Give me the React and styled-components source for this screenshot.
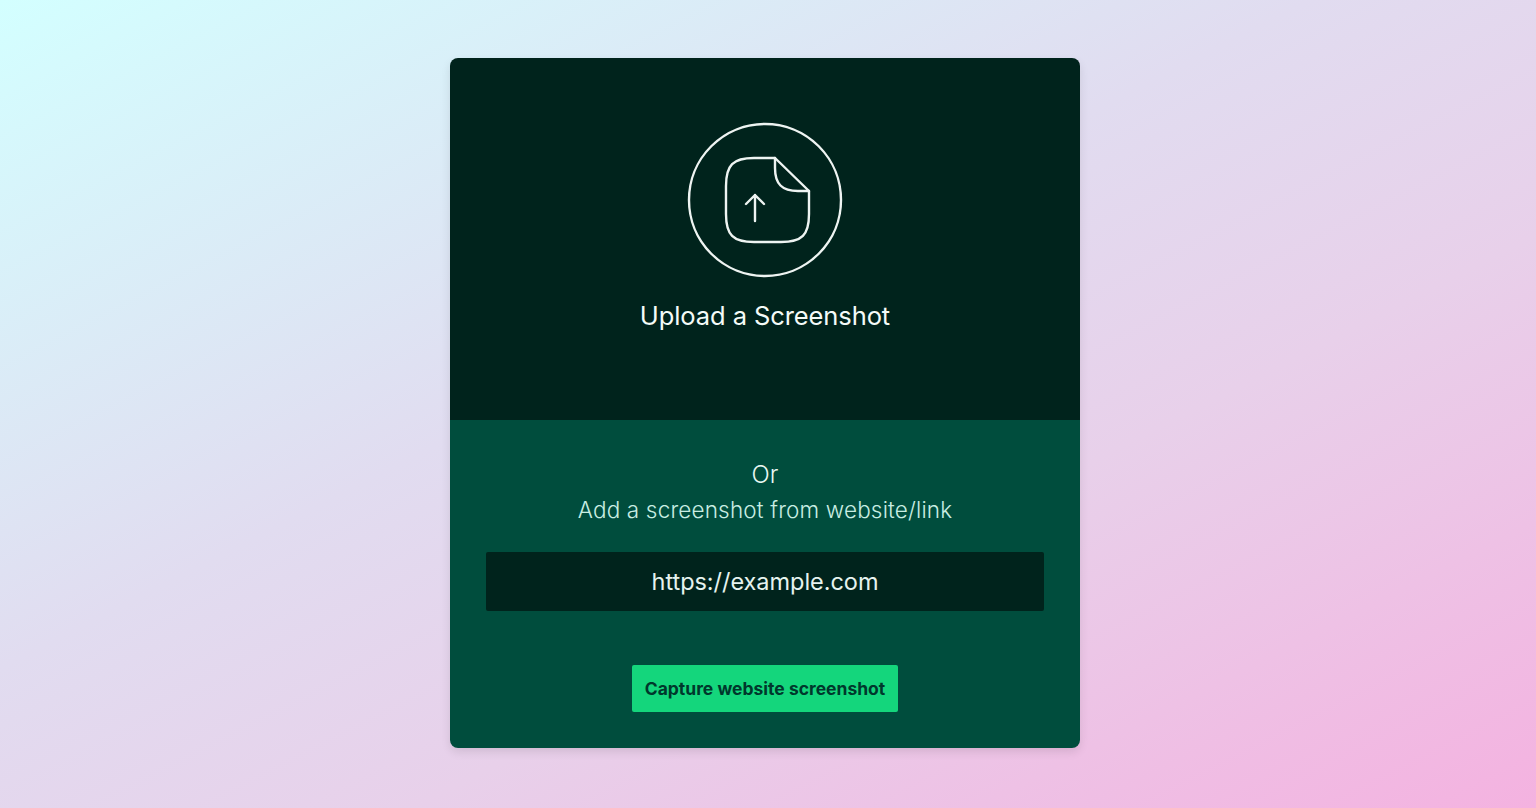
import React from "react";
import styled, { createGlobalStyle } from "styled-components";

const GlobalStyle = createGlobalStyle`
  html, body {
    margin: 0;
    padding: 0;
    height: 100%;
  }
  body {
    font-family: "Inter", "Open Sans", sans-serif;
  }
`;

const Page = styled.div`
  box-sizing: border-box;
  min-height: 808px;
  height: 100vh;
  padding-top: 58px;
  padding-left: 450px;
  overflow: hidden;
  background: linear-gradient(153deg, #d3ffff 0%, #e1dcf0 42%, #e8d0ea 64%, #f4b2e0 100%);
`;
const Card = styled.div`
  width: 630px;
  height: 690px;
  border-radius: 8px;
  overflow: hidden;
  display: flex;
  flex-direction: column;
  box-shadow: 0 4px 10px rgba(0, 0, 0, 0.1);
`;
const UploadPanel = styled.div`
  height: 362px;
  box-sizing: border-box;
  padding-top: 64px;
  background: #00231c;
  display: flex;
  flex-direction: column;
  align-items: center;
`;
const UploadTitle = styled.div`
  margin-top: 19px;
  color: #f4fbf8;
  font-size: 25.5px;
  line-height: 38px;
  font-weight: 400;
  letter-spacing: -0.09px;
`;
const LinkPanel = styled.div`
  flex: 1;
  box-sizing: border-box;
  padding: 37px 36px 0;
  background: #004d3d;
  display: flex;
  flex-direction: column;
  align-items: center;
`;
const Or = styled.div`
  color: #e8f7f2;
  font-size: 24px;
  line-height: 35px;
  font-weight: 300;
`;
const Hint = styled.div`
  color: #c9eee3;
  font-size: 22.5px;
  line-height: 36px;
  font-weight: 300;
  letter-spacing: 0.17px;
`;
const UrlInput = styled.input`
  margin-top: 24px;
  width: 100%;
  height: 59px;
  box-sizing: border-box;
  border: 0;
  outline: 0;
  border-radius: 2px;
  background: #00231c;
  color: #e6f3ef;
  font-family: inherit;
  font-size: 23.5px;
  text-align: center;
  letter-spacing: -0.04px;
  &::placeholder {
    color: #e6f3ef;
    opacity: 1;
  }
`;
const CaptureButton = styled.button`
  margin-top: 54px;
  width: 266px;
  height: 47px;
  border: 0;
  border-radius: 2px;
  background: #14d67c;
  color: #00382c;
  font-family: inherit;
  font-size: 17.5px;
  font-weight: 700;
  white-space: nowrap;
  padding: 0;
  cursor: pointer;
`;

function UploadIcon() {
  return (
    <svg width="156" height="156" viewBox="687 122 156 156" fill="none" stroke="#eef4f2" strokeWidth="2.4" strokeLinecap="round" strokeLinejoin="round">
      <circle cx="765" cy="200" r="76" />
      <path d="M775 158 H754 C733 158 726 165 726 186 V214 C726 235 733 242 754 242 H781 C802 242 809 235 809 214 V191 Z" />
      <path d="M775 158 V168 C775 184 782 191 798 191 H809" />
      <path d="M755 221 V195 M746 204 L755 195 L764 204" />
    </svg>
  );
}

export default function App() {
  return (
    <>
      <GlobalStyle />
      <Page>
        <Card>
          <UploadPanel>
            <UploadIcon />
            <UploadTitle>Upload a Screenshot</UploadTitle>
          </UploadPanel>
          <LinkPanel>
            <Or>Or</Or>
            <Hint>Add a screenshot from website/link</Hint>
            <UrlInput placeholder="https://example.com" />
            <CaptureButton>Capture website screenshot</CaptureButton>
          </LinkPanel>
        </Card>
      </Page>
    </>
  );
}
